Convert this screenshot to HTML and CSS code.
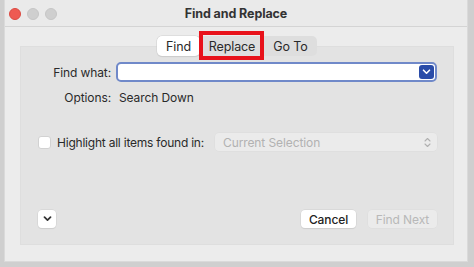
FILE: index.html
```html
<!DOCTYPE html>
<html>
<head>
<meta charset="utf-8">
<link rel="stylesheet" href="styles.css">
</head>
<body>
<div class="window">
  <div class="titlebar">
    <div class="lights">
      <span class="light red"></span>
      <span class="light"></span>
      <span class="light"></span>
    </div>
    <div class="title">Find and Replace</div>
  </div>
  <div class="panel">
    <div class="tabs">
      <span class="tab active">Find</span>
      <span class="tab replace">Replace<span class="highlight"></span></span>
      <span class="tab">Go To</span>
    </div>
    <div class="row find-row">
      <span class="label">Find what:</span>
      <div class="input">
        <span class="drop">
          <svg width="9" height="6" viewBox="0 0 9 6"><path d="M1.5 1.2 L4.5 4.2 L7.5 1.2" fill="none" stroke="#fff" stroke-width="1.6" stroke-linecap="round" stroke-linejoin="round"/></svg>
        </span>
      </div>
    </div>
    <div class="row options-row">
      <span class="label">Options:</span>
      <span class="value">Search Down</span>
    </div>
    <div class="row highlight-row">
      <span class="checkbox"></span>
      <span class="hl-label">Highlight all items found in:</span>
      <div class="select">
        <span>Current Selection</span>
        <svg width="7" height="11" viewBox="0 0 7 11"><path d="M1 4 L3.5 1.5 L6 4 M1 7 L3.5 9.5 L6 7" fill="none" stroke="#b0b0b0" stroke-width="1.1" stroke-linecap="round" stroke-linejoin="round"/></svg>
      </div>
    </div>
    <div class="spacer"></div>
    <div class="row bottom-row">
      <span class="btn small">
        <svg width="9" height="6" viewBox="0 0 9 6"><path d="M1.5 1.2 L4.5 4.2 L7.5 1.2" fill="none" stroke="#333" stroke-width="1.7" stroke-linecap="round" stroke-linejoin="round"/></svg>
      </span>
      <span class="grow"></span>
      <span class="btn cancel">Cancel</span>
      <span class="btn disabled">Find Next</span>
    </div>
  </div>
</div>
</body>
</html>
```

FILE: styles.css
```css
* { box-sizing: border-box; }
html, body { margin: 0; padding: 0; }
body {
  width: 474px;
  height: 267px;
  background: #cfcfcf;
  font-family: Inter, "Noto Sans", sans-serif;
  font-size: 12px;
  letter-spacing: -0.1px;
  color: #2a2a2a;
  overflow: hidden;
}
.window {
  margin: 0 6px 0 4px;
  width: 464px;
  height: 262px;
  background: #ececec;
  border: 1px solid #dadada;
  border-top: none;
  display: flex;
  flex-direction: column;
}
.titlebar {
  height: 27px;
  flex: none;
  position: relative;
  display: flex;
  align-items: center;
  justify-content: center;
  background: #eaeaea;
  border-bottom: 1px solid #d4d4d4;
}
.lights {
  position: absolute;
  left: 4px;
  top: 8px;
  display: flex;
  gap: 6px;
}
.light {
  width: 12px;
  height: 12px;
  border-radius: 50%;
  background: #cfcfcf;
  border: 1px solid #c6c6c6;
}
.light.red { background: #ee5a52; border-color: #dc4a42; }
.title {
  font-weight: 700;
  font-size: 12.5px;
  color: #333;
  margin-top: 1px;
}
.panel {
  margin: 19px 0 0 15px;
  width: 434px;
  height: 199px;
  background: #e3e3e3;
  border: 1px solid #dedede;
  display: flex;
  flex-direction: column;
  padding: 0 16px 16px 16px;
}
.tabs {
  align-self: center;
  margin-top: -11px;
  display: flex;
  height: 20px;
  background: #dedede;
  border-radius: 5px;
}
.tab {
  position: relative;
  display: flex;
  align-items: center;
  justify-content: center;
  height: 20px;
  font-size: 12.5px;
  color: #2a2a2a;
  white-space: nowrap;
}
.tab.active {
  background: #fff;
  border-radius: 5px;
  box-shadow: 0 0 0 0.5px #cfcfcf, 0 1px 1px rgba(0,0,0,0.12);
  width: 43px;
}
.tab.replace { width: 64px; }
.tab:last-child { width: 53px; }
.highlight {
  position: absolute;
  left: -1px;
  top: -5px;
  width: 65px;
  height: 29px;
  border: 4px solid #e8121b;
}
.row {
  display: flex;
  align-items: center;
  white-space: nowrap;
}
.label {
  width: 74px;
  flex: none;
  text-align: right;
}
.find-row {
  margin-top: 6px;
  height: 20px;
}
.input {
  margin-left: 5px;
  flex: 1;
  height: 20px;
  background: #fff;
  border: 2px solid #7089c9;
  border-radius: 5px;
  display: flex;
  align-items: center;
  justify-content: flex-end;
  padding-right: 1px;
}
.drop {
  width: 15px;
  height: 14px;
  background: #2a4ca8;
  border-radius: 3px;
  display: flex;
  align-items: center;
  justify-content: center;
}
.options-row {
  margin-top: 7px;
  height: 16px;
}
.value { margin-left: 8px; }
.highlight-row {
  margin-top: 28px;
  height: 18px;
}
.checkbox {
  width: 13px;
  height: 13px;
  flex: none;
  background: #fff;
  border: 1px solid #d2d2d2;
  border-radius: 3px;
  margin-left: 1px;
}
.hl-label { margin-left: 6px; flex: none; letter-spacing: -0.22px; }
.select {
  margin-left: 11px;
  flex: 1;
  height: 18px;
  background: #ebebeb;
  border-radius: 4px;
  box-shadow: 0 0 0 0.5px #dcdcdc;
  display: flex;
  align-items: center;
  justify-content: space-between;
  padding: 0 6px 0 8px;
  color: #b2b2b2;
}
.spacer { flex: 1; }
.bottom-row { height: 18px; }
.grow { flex: 1; }
.btn {
  height: 18px;
  display: flex;
  align-items: center;
  justify-content: center;
  background: #fff;
  border-radius: 4px;
  box-shadow: 0 0 0 0.5px #d0d0d0, 0 1px 1px rgba(0,0,0,0.1);
  font-size: 12px;
}
.btn.small { width: 18px; margin-left: 1px; }
.btn.cancel { width: 55px; font-weight: 500; color: #222; margin-right: 12px; }
.btn.disabled {
  width: 69px;
  background: #ebebeb;
  color: #b8b8b8;
  box-shadow: 0 0 0 0.5px #dcdcdc;
}
```
